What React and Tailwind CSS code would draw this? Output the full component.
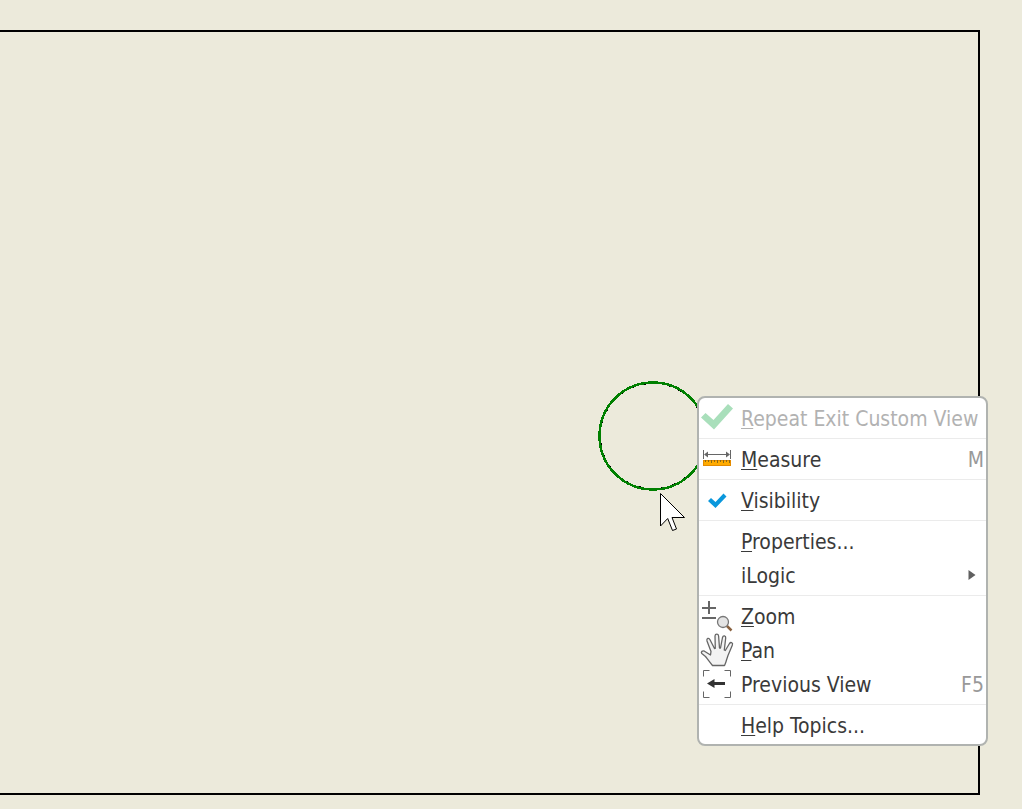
import React from "react";

function CheckIcon() {
  return (
    <svg viewBox="0 0 36 34" className="h-[34px] w-[36px]" aria-hidden="true">
      <path d="M2 16.500 6.500 12 14.500 19 29 3 34 7.500 15 28.500Z" fill="#a9dfbb" />
    </svg>
  );
}

function MeasureIcon() {
  return (
    <svg viewBox="0 0 36 34" className="h-[34px] w-[36px]" aria-hidden="true">
      <path d="M4.500 8v9M31.500 8v9M6 12.500h24" stroke="#666" fill="none" />
      <path d="M5 12.500 9 9.500v6ZM31 12.500 27 9.500v6Z" fill="#666" />
      <rect x="4.500" y="18.500" width="27" height="5" fill="#ffab00" stroke="#e48b00" />
      <path d="M6.500 18v2M9.500 18v2M12.500 18v3M15.500 18v2M18.500 18v3M21.500 18v2M24.500 18v3M27.500 18v2M30.500 18v3" stroke="#8b6914" />
    </svg>
  );
}

function VisibleIcon() {
  return (
    <svg viewBox="0 0 36 34" className="h-[34px] w-[36px]" aria-hidden="true">
      <path d="M9 18 12 15 16.500 19 24.500 10.500 27.500 13.500 16.500 25Z" fill="#0a97dc" />
    </svg>
  );
}

function ZoomIcon() {
  return (
    <svg viewBox="0 0 36 34" className="h-[34px] w-[36px]" aria-hidden="true">
      <path d="M10 2v13M3 9h14M3 19h14" stroke="#666" strokeWidth="2" fill="none" />
      <path d="M27.500 26.500 32.500 31.500" stroke="#8a6240" strokeWidth="2.500" />
      <circle cx="24" cy="23" r="5.500" fill="#e4e4e4" stroke="#777" strokeWidth="1.300" />
    </svg>
  );
}

function PanIcon() {
  return (
    <svg viewBox="0 0 36 34" className="h-[34px] w-[36px]" aria-hidden="true">
      <path
        d="M13.500 32.500C10.500 29 8 25.500 6.500 23.500L2.800 20.500C1.500 18.800 3.500 17.300 5.500 18.200L11.500 22 12 18.500 8 8C7.300 5.300 9.800 4.300 11 6.700L15.500 15.500 16.300 15.300 16 3C16.200 .5 19.300 .5 19.600 3L20.500 15 21.500 15 23.500 4.500C24.200 2 27 2.600 26.700 5L25.300 17 26.300 17.500 30.500 10.500C32 8.500 34.300 10 33.300 12.200L29 22.500 27.500 27C27 29.500 26 31 25.500 32.500Z"
        fill="#f3f3f3"
        stroke="#666"
        strokeWidth="1.300"
        strokeLinejoin="round"
      />
    </svg>
  );
}

function PreviousIcon() {
  return (
    <svg viewBox="0 0 36 34" className="h-[34px] w-[36px]" aria-hidden="true">
      <path d="M4.500 9.500v-6h6M25.500 3.500h6v6M31.500 24.500v6h-6M10.500 30.500h-6v-6" fill="none" stroke="#666" />
      <path d="M8 16.500 15.500 12v3H26v3H15.500v3Z" fill="#333" />
    </svg>
  );
}

const groups = [
  [{ key: "R", rest: "epeat Exit Custom View", Icon: CheckIcon, disabled: true }],
  [{ key: "M", rest: "easure", Icon: MeasureIcon, shortcut: "M" }],
  [{ key: "V", rest: "isibility", Icon: VisibleIcon }],
  [
    { key: "P", rest: "roperties..." },
    { key: "", rest: "iLogic", submenu: true },
  ],
  [
    { key: "Z", rest: "oom", Icon: ZoomIcon },
    { key: "P", rest: "an", Icon: PanIcon },
    { key: "", rest: "Previous View", Icon: PreviousIcon, shortcut: "F5" },
  ],
  [{ key: "H", rest: "elp Topics..." }],
];

function MenuItem({ item }) {
  const { key, rest, Icon, shortcut, submenu, disabled } = item;
  return (
    <button
      type="button"
      role="menuitem"
      disabled={disabled}
      aria-haspopup={submenu ? "menu" : undefined}
      className="flex h-[34px] w-full items-center pr-[2px] text-left text-[#3a3a3a] disabled:text-[#b2b2b2]"
    >
      <span className="flex w-[42px] shrink-0">{Icon && <Icon />}</span>
      <span className="grow pt-[2px] whitespace-nowrap">
        {key && <span className="underline decoration-1 underline-offset-2">{key}</span>}
        {rest}
      </span>
      {shortcut && <kbd className="pt-[2px] font-[inherit] text-[#999]">{shortcut}</kbd>}
      {submenu && (
        <svg viewBox="0 0 8 10" className="mr-2 h-[10px] w-[8px]" aria-hidden="true">
          <path d="M.5 0 7.500 5 .5 10Z" fill="#606060" />
        </svg>
      )}
    </button>
  );
}

export default function App() {
  return (
    <main className="relative flex min-h-screen overflow-hidden bg-[#eceadb] pt-[30px] pr-[42px] pb-[14px] font-['DejaVu_Sans_Condensed','DejaVu_Sans',sans-serif] text-[21px] leading-6">
      <div className="grow border-y-2 border-r-2 border-black" />

      <svg viewBox="0 0 110 110" className="absolute top-[381px] left-[598px] size-[110px]" aria-label="Circle">
        <circle cx="55" cy="55" r="53" fill="none" stroke="#000" strokeWidth="2" strokeDasharray="3 9" shapeRendering="crispEdges" />
        <circle cx="55" cy="55" r="53.500" fill="none" stroke="#008000" strokeWidth="2.400" shapeRendering="crispEdges" />
      </svg>

      <svg viewBox="0 0 28 40" className="absolute top-[492px] left-[659px] h-[40px] w-[28px]" aria-hidden="true">
        <path d="M1.500 1.500V34L8.700 26.500 13.500 38.500 17.500 37 13 25.500H25.500Z" fill="#fff" stroke="#000" />
      </svg>

      <div
        role="menu"
        className="absolute top-[396px] left-[697px] w-[291px] divide-y divide-[#ebebeb] rounded-lg border-2 border-[#b0b3b0] bg-white"
      >
        {groups.map((items, index) => (
          <div key={index} role="group" className="py-[3px] last:pb-[2px]">
            {items.map((item) => (
              <MenuItem key={item.rest} item={item} />
            ))}
          </div>
        ))}
      </div>
    </main>
  );
}
